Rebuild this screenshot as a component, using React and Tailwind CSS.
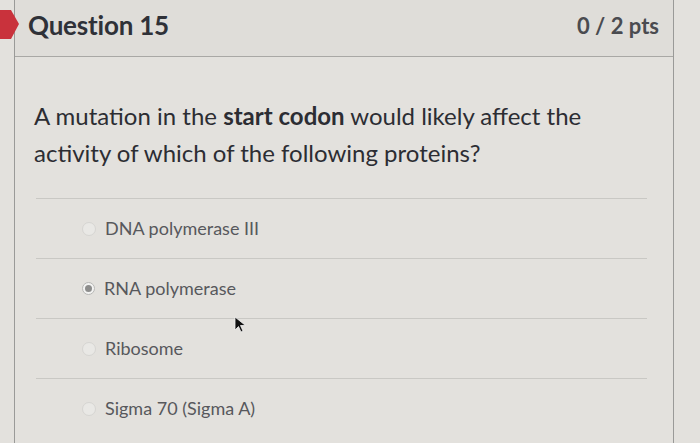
export default function App() {
  const answers = [
    { text: "DNA polymerase III", selected: false },
    { text: "RNA polymerase", selected: true },
    { text: "Ribosome", selected: false },
    { text: "Sigma 70 (Sigma A)", selected: false },
  ];

  return (
    <div
      className="relative w-[700px] h-[443px] overflow-hidden bg-[#e3e1dd]"
      style={{ fontFamily: "Lato, 'Open Sans', sans-serif" }}
    >
      {/* red marker */}
      <svg className="absolute left-0 top-[10px]" width="20" height="30" viewBox="0 0 20 30">
        <polygon points="0,0 11,0 19,14 11,29 0,29" fill="#c9323c" />
      </svg>

      {/* mouse cursor */}
      <svg className="absolute left-[234px] top-[316px]" width="14" height="18" viewBox="0 0 14 18">
        <path d="M1 1 L1 14 L4.5 10.5 L7 16 L9 15 L6.5 9.5 L11.5 9.5 Z" fill="#111" stroke="#f2f2f2" strokeWidth="0.8" />
      </svg>

      <div className="ml-[14px] w-[660px] h-full border-l border-r border-[#9a9a98]">
        {/* header */}
        <div className="h-[57px] flex items-center justify-between pl-[13px] pr-[14px] pb-[6px] bg-[#dfddd9] border-b border-[#a9a8a5]">
          <h2 className="text-[26px] font-bold text-[#2f3138] tracking-[-0.2px]">Question 15</h2>
          <span className="text-[22px] font-bold text-[#4a4b50]">0 / 2 pts</span>
        </div>

        {/* question */}
        <div className="pl-[19px] pt-[40px] text-[24px] leading-[37px] text-[#2c2d33]">
          A mutation in the <span className="font-bold">start codon</span> would likely affect the
          <br />
          activity of which of the following proteins?
        </div>

        {/* answers */}
        <div className="mt-[27px] ml-[21px] mr-[26px]">
          {answers.map((a) => (
            <div key={a.text} className="h-[60px] border-t border-[#c9c8c4] flex items-center pl-[46px] gap-[9px]">
              {a.selected ? (
                <span className="w-[13px] h-[13px] rounded-full border border-[#b8b8b6] bg-[#f3f3f2] flex items-center justify-center">
                  <span className="w-[7px] h-[7px] rounded-full bg-[#8d8d8c]" />
                </span>
              ) : (
                <span className="w-[14px] h-[14px] rounded-full border border-[#d6d5d2] bg-[#e9e8e5]" />
              )}
              <span className="text-[18px] text-[#57585c]">{a.text}</span>
            </div>
          ))}
        </div>
      </div>
    </div>
  );
}
